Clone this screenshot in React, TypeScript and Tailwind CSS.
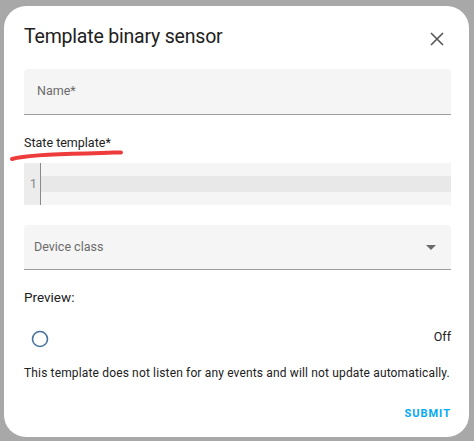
import React from 'react';

const font = { fontFamily: 'Roboto, "Noto Sans", sans-serif' };

// 다이얼로그 본문
const App: React.FC = () => {
    return (
        <div className="w-[474px] h-[441px] bg-[#a8a8a8] pt-[6px] pl-[4px] overflow-hidden" style={font}>
            <div className="relative w-[465px] h-[431px] bg-white rounded-[22px] pl-[20px] pr-[18px] pt-[17px] flex flex-col">
                {/* 제목 + 닫기 */}
                <div className="flex items-center justify-between h-[28px]">
                    <h1 className="text-[19.5px] leading-[28px] text-[#212121] tracking-[-0.2px]">Template binary sensor</h1>
                    <svg width="14" height="14" viewBox="0 0 14 14" className="mr-[7px] mt-[4px]">
                        <path d="M1 1L13 13M13 1L1 13" stroke="#555" strokeWidth="1.6" />
                    </svg>
                </div>

                {/* Name 입력 */}
                <div className="mt-[18px] h-[46px] bg-[#f5f5f5] border-b border-[#9e9e9e] rounded-t-[4px] flex items-center pl-[13px]">
                    <span className="text-[12.5px] text-[#6b6b6b]">Name*</span>
                </div>

                {/* State template */}
                <div className="mt-[20px] h-[16px] text-[12.5px] leading-[16px] text-[#212121]">State template*</div>

                <div className="mt-[12px] h-[42px] bg-[#f5f5f5] flex">
                    <div className="w-[17px] bg-[#ececec] border-r border-[#8a8a8a] flex items-center justify-end pr-[3px]">
                        <span className="text-[13px] text-[#8a8a8a]">1</span>
                    </div>
                    <div className="flex-1 flex flex-col justify-center">
                        <div className="h-[16px] bg-[#e8e8e8]" />
                    </div>
                </div>

                {/* Device class 선택 */}
                <div className="mt-[20px] h-[45px] bg-[#f5f5f5] border-b border-[#9e9e9e] rounded-t-[4px] flex items-center justify-between pl-[10px] pr-[15px]">
                    <span className="text-[12.5px] text-[#6b6b6b]">Device class</span>
                    <svg width="10" height="5" viewBox="0 0 10 5">
                        <path d="M0 0L10 0L5 5Z" fill="#6b6b6b" />
                    </svg>
                </div>

                {/* 미리보기 */}
                <div className="mt-[17px] h-[20px] text-[13.5px] leading-[20px] text-[#212121]">Preview:</div>

                <div className="mt-[22px] h-[20px] flex items-center justify-between">
                    <svg width="18" height="18" viewBox="0 0 18 18" className="ml-[7px]">
                        <circle cx="9" cy="9" r="7.5" fill="none" stroke="#44739e" strokeWidth="1.6" />
                    </svg>
                    <span className="text-[12.5px] text-[#212121] -mt-[3px]">Off</span>
                </div>

                <p className="mt-[16px] text-[12px] leading-[16px] text-[#212121] tracking-[0.15px] whitespace-nowrap">
                    This template does not listen for any events and will not update automatically.
                </p>

                <div className="mt-[25px] flex justify-end">
                    <span className="text-[11px] font-bold tracking-[1px] text-[#03a9f4]">SUBMIT</span>
                </div>

                {/* 빨간 손그림 밑줄 */}
                <svg width="130" height="14" viewBox="0 0 130 14" className="absolute left-[2px] top-[143px]">
                    <path d="M6 10 C 20 6, 50 5, 80 4.5 S 110 3, 115 3.5" fill="none" stroke="#ee3b3b" strokeWidth="4" strokeLinecap="round" />
                </svg>
            </div>
        </div>
    );
};

export default App;
